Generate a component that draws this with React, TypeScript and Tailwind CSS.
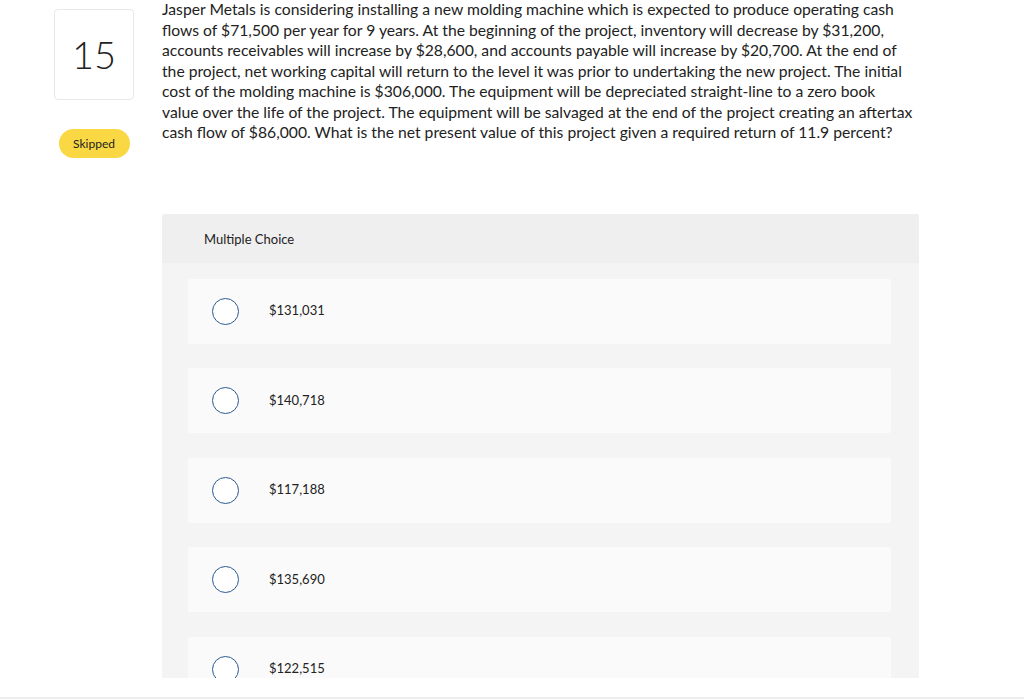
const options = ["$131,031", "$140,718", "$117,188", "$135,690", "$122,515"];

const lines = [
  "Jasper Metals is considering installing a new molding machine which is expected to produce operating cash",
  "flows of $71,500 per year for 9 years. At the beginning of the project, inventory will decrease by $31,200,",
  "accounts receivables will increase by $28,600, and accounts payable will increase by $20,700. At the end of",
  "the project, net working capital will return to the level it was prior to undertaking the new project. The initial",
  "cost of the molding machine is $306,000. The equipment will be depreciated straight-line to a zero book",
  "value over the life of the project. The equipment will be salvaged at the end of the project creating an aftertax",
  "cash flow of $86,000. What is the net present value of this project given a required return of 11.9 percent?",
];

function Radio() {
  return <span className="h-[27px] w-[27px] shrink-0 rounded-full border-[1.5px] border-[#2a5a92] bg-white" />;
}

export default function App() {
  return (
    <div className="h-[700px] w-[1024px] overflow-hidden bg-white font-['Lato',sans-serif] text-[#222]">
      <div className="flex h-[678px] overflow-hidden">
        <div className="flex w-[162px] shrink-0 flex-col items-center pl-[54px] pr-[28px] pt-[9px]">
          <div className="flex h-[91px] w-[80px] items-center justify-center rounded-[4px] border border-[#e8e8e8] text-[38px] font-light text-[#222]">
            15
          </div>
          <span className="mt-[29px] flex h-[29px] w-[71px] items-center justify-center rounded-full bg-[#f9d843] text-[12px] text-[#222]">
            Skipped
          </span>
        </div>
        <div className="w-[757px] shrink-0">
          <p className="mt-[-1px] whitespace-nowrap text-[15.7px] leading-[20.5px] text-[#222]">
            {lines.map((l) => (
              <span key={l} className="block">
                {l}
              </span>
            ))}
          </p>
          <div className="mt-[71px] rounded-t-[3px] bg-[#f4f4f4]">
            <div className="flex h-[49px] items-center rounded-t-[3px] bg-[#efefef] pl-[42px] pt-[3px] text-[13px] text-[#222]">
              Multiple Choice
            </div>
            <div className="flex flex-col gap-[24.5px] pl-[26px] pr-[28px] pt-[16px] pb-[25px]">
              {options.map((o) => (
                <div key={o} className="flex h-[65px] items-center rounded-[2px] bg-[#fafafa] pl-[24px]">
                  <Radio />
                  <span className="ml-[30px] text-[13px] text-[#222]">{o}</span>
                </div>
              ))}
            </div>
          </div>
        </div>
      </div>
      <div className="mt-[19px] h-[2px] bg-[#ededed]" />
    </div>
  );
}
